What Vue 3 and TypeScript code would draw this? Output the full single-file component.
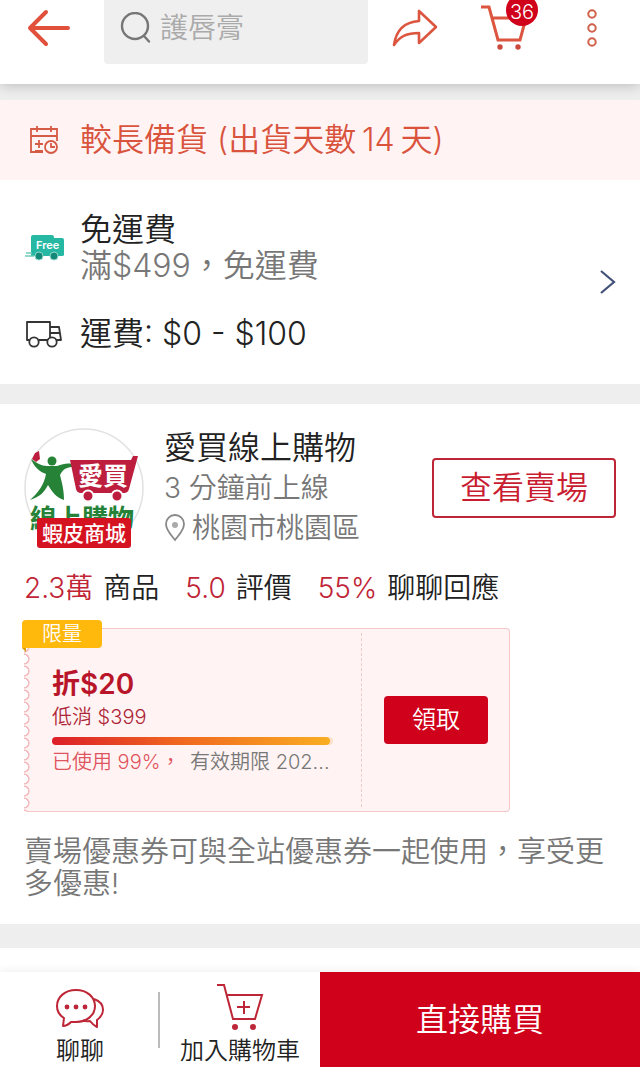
<script setup lang="ts">
interface Stat {
  value: string
  label: string
}

const cartCount = 36
const usedPercent = 99
const stats: Stat[] = [
  { value: '2.3萬', label: '商品' },
  { value: '5.0', label: '評價' },
  { value: '55%', label: '聊聊回應' },
]
</script>

<template>
  <div class="page">
    <header class="topbar">
      <button class="back" type="button" aria-label="返回">
        <svg width="44" height="40" viewBox="0 0 44 40" fill="none" stroke="#e0503a" stroke-width="4" stroke-linecap="round" stroke-linejoin="round">
          <path d="M41 20H3M19 4 3 20l16 16" />
        </svg>
      </button>
      <label class="search">
        <svg width="32" height="32" viewBox="0 0 32 32" fill="none" stroke="#777" stroke-width="2.400" stroke-linecap="round">
          <circle cx="15" cy="14" r="13" />
          <path d="m24 24 5 5.500" />
        </svg>
        <input type="search" placeholder="護唇膏" aria-label="搜尋" />
      </label>
      <nav class="tools">
        <button type="button" aria-label="分享">
          <svg width="46" height="40" viewBox="0 0 46 40" fill="none" stroke="#dc553e" stroke-width="2.600" stroke-linejoin="round">
            <path d="M27 3v10C12 14 4 23 2 37c6-9 13-12 25-12v10l17-16z" />
          </svg>
        </button>
        <button class="cart" type="button" aria-label="購物車">
          <svg width="64" height="50" viewBox="0 0 64 50" fill="none" stroke="#dc553e" stroke-width="3">
            <path d="M1 5h8l9 33h22l6-22H12" />
            <circle cx="20" cy="45" r="2.700" fill="#cc4a3c" stroke="none" />
            <circle cx="38" cy="45" r="2.700" fill="#cc4a3c" stroke="none" />
          </svg>
          <span class="count">{{ cartCount }}</span>
        </button>
        <button type="button" aria-label="更多">
          <svg width="12" height="40" viewBox="0 0 12 40" fill="#fff" stroke="#cf6149" stroke-width="2">
            <circle cx="6" cy="6" r="3.700" />
            <circle cx="6" cy="20" r="3.700" />
            <circle cx="6" cy="34" r="3.700" />
          </svg>
        </button>
      </nav>
    </header>

    <main>
      <section class="notice">
        <svg width="32" height="32" viewBox="0 0 32 32" fill="none" stroke="#d65b45" stroke-width="1.800">
          <path d="M15 28H3V5h26v12M3 12h26M9 2v6M23 2v6M7 20h8M11 16v8M7 27h8" />
          <circle cx="23" cy="23" r="6" />
          <path d="M23 19v4h4" />
        </svg>
        <p>較長備貨 (出貨天數&thinsp;14&thinsp;天)</p>
      </section>

      <section class="shipping">
        <div class="rows">
          <div class="row">
            <svg width="42" height="28" viewBox="0 0 42 28">
              <path d="M9 1h19q2 0 2 3h8q2 0 2 2v15q0 1-2 1H7V3q0-2 2-2z" fill="#27b8a3" />
              <path d="M2 19h6M1 22h9" stroke="#6fcbb9" stroke-width="1.400" />
              <circle cx="15" cy="22" r="4" fill="#158878" stroke="#8dd9cc" />
              <circle cx="30" cy="22" r="4" fill="#158878" stroke="#8dd9cc" />
              <text x="12" y="15" class="free">Free</text>
            </svg>
            <div>
              <p>免運費</p>
              <p class="muted">滿$499，免運費</p>
            </div>
          </div>
          <div class="row">
            <svg width="42" height="32" viewBox="0 0 42 32" fill="none" stroke="#333" stroke-width="1.800" stroke-linejoin="round">
              <path d="M5 22H3V4h23v18H15M26 9h9l2 13h-4M26 15h10" />
              <circle cx="10" cy="24" r="4.700" />
              <circle cx="28" cy="24" r="4.700" fill="#fff" />
            </svg>
            <p>運費: $0 - $100</p>
          </div>
        </div>
        <svg width="16" height="28" viewBox="0 0 16 28" fill="none" stroke="#415077" stroke-width="2.200">
          <path d="m1 3 13 11L1 25" />
        </svg>
      </section>

      <section class="shop">
        <div class="profile">
          <svg class="avatar" width="120" height="120" viewBox="0 0 120 120" role="img" aria-label="愛買線上購物">
            <circle cx="60" cy="60" r="59" fill="#fff" stroke="#e2e2e2" stroke-width="1.500" />
            <path d="m8 31 3-6 4-2 1 8-4 3z" fill="#bd1e3e" />
            <circle cx="28" cy="33" r="4.500" fill="#258237" />
            <path d="M7 31c6 4 10 7 16 7h10c6-2 10-3 15-2l1 3c-6 0-10 2-13 8 2 8 4 15 4 25-7-2-12-8-16-15-4 8-9 12-18 15 8-7 14-15 16-26-6-2-12-7-15-15z" fill="#258237" />
            <path d="M46 32h61l2-4h5l-9 33q-1 4-5 4H57q-4 0-5-4z" fill="#bd1e3e" />
            <circle cx="64" cy="68" r="5.500" fill="#bd1e3e" stroke="#fff" stroke-width="2" />
            <circle cx="93" cy="68" r="5.500" fill="#bd1e3e" stroke="#fff" stroke-width="2" />
            <text x="54" y="57" class="logo-name">愛買</text>
            <text x="6" y="100" class="logo-sub">線上購物</text>
            <rect x="13" y="90" width="94" height="30" rx="3" fill="#d51220" />
            <text x="18" y="113" class="logo-mall">蝦皮商城</text>
          </svg>
          <div class="about">
            <h1>愛買線上購物</h1>
            <p>3 分鐘前上線</p>
            <p class="place">
              <svg width="22" height="28" viewBox="0 0 22 28" fill="none" stroke="#888" stroke-width="1.800">
                <path d="M11 26C7 21 2 16 2 10a9 9 0 0 1 18 0c0 6-5 11-9 16z" />
                <circle cx="11" cy="11" r="3" fill="#aaa" stroke="none" />
              </svg>
              桃園市桃園區
            </p>
          </div>
          <button class="visit" type="button">查看賣場</button>
        </div>

        <ul class="stats">
          <li v-for="s in stats" :key="s.label"><b>{{ s.value }}</b>{{ s.label }}</li>
        </ul>

        <article class="coupon">
          <span class="tag">限量</span>
          <div class="offer">
            <h2>折$20</h2>
            <p class="minimum">低消 $399</p>
            <div class="track"><div class="fill" :style="{ width: usedPercent + '%' }"></div></div>
            <p class="terms"><span>已使用 {{ usedPercent }}%，</span> 有效期限 202...</p>
          </div>
          <div class="claim"><button type="button">領取</button></div>
        </article>

        <p class="note">賣場優惠券可與全站優惠券一起使用，享受更多優惠!</p>
      </section>
      <section class="next"></section>
    </main>

    <footer class="actions">
      <button class="chat" type="button">
        <svg width="50" height="44" viewBox="0 0 50 44" fill="none" stroke="#bd2636" stroke-width="2" stroke-linejoin="round">
          <path d="M21 3c11 0 19 7 19 16s-8 16-19 16h-5q-4 4-8 4l1-8C4 28 2 24 2 19 2 10 10 3 21 3z" />
          <path d="M39 12c6 2 9 6 9 11 0 4-2 7-6 10v7q-4-2-7-6-4 1-7-1" />
          <g fill="#bd2636" stroke="none">
            <circle cx="12" cy="20" r="2.400" />
            <circle cx="21" cy="20" r="2.400" />
            <circle cx="30" cy="20" r="2.400" />
          </g>
        </svg>
        聊聊
      </button>
      <button type="button">
        <svg width="50" height="50" viewBox="0 0 50 50" fill="none" stroke="#bd2636" stroke-width="2">
          <path d="M2 4h7l9 34h22l7-24H12M22 26h13M29 20v13" />
          <circle cx="20" cy="46" r="3" fill="#bd2636" stroke="none" />
          <circle cx="38" cy="46" r="3" fill="#bd2636" stroke="none" />
        </svg>
        加入購物車
      </button>
      <button class="buy" type="button">直接購買</button>
    </footer>
  </div>
</template>

<style>
body {
  margin: 0;
  background: #fff;
}
</style>

<style scoped>
.page {
  font-family: Inter, "Noto Sans CJK TC", sans-serif;
  font-size: 32px;
  font-weight: 350;
  line-height: 36px;
  color: #222;
  background: #eee;
  min-height: 100vh;
  overflow: hidden;
}
p, h1, h2, ul {
  margin: 0;
  padding: 0;
  font-weight: inherit;
}
button {
  font: inherit;
  color: inherit;
  background: none;
  border: 0;
  padding: 0;
}
svg {
  display: block;
  flex: none;
}
.topbar {
  display: flex;
  align-items: flex-start;
  height: 84px;
  background: #fff;
  box-shadow: 0 2px 12px rgba(0, 0, 0, 0.2);
}
.back {
  width: 104px;
  padding: 8px 0 0 27px;
}
.search {
  flex: 1;
  min-width: 0;
  display: flex;
  gap: 8px;
  height: 56px;
  padding: 0 16px 8px;
  align-items: center;
  background: #efefef;
  border-radius: 0 0 4px 4px;
}
.search input {
  flex: 1;
  min-width: 0;
  padding: 0;
  border: 0;
  outline: 0;
  background: none;
  font: inherit;
  font-size: 28px;
}
.search input::placeholder {
  color: #aaa;
}
.tools {
  display: flex;
  justify-content: space-between;
  align-items: flex-start;
  width: 206px;
  padding: 8px 42px 0 24px;
}
.cart {
  position: relative;
  margin-top: -6px;
}
.count {
  position: absolute;
  top: -8px;
  left: 26px;
  min-width: 32px;
  padding-top: 4px;
  border-radius: 16px;
  background: #d0011b;
  color: #fff;
  font-size: 20px;
  line-height: 28px;
  text-align: center;
}
.notice {
  display: flex;
  align-items: center;
  gap: 20px;
  margin-top: 16px;
  padding: 22px 28px;
  background: #fff3f4;
  color: #d9533d;
}
.shipping {
  display: flex;
  align-items: center;
  justify-content: space-between;
  padding: 32px 24px;
  background: #fff;
}
.rows {
  display: grid;
  gap: 32px;
}
.row {
  display: flex;
  align-items: center;
  gap: 14px;
}
.muted {
  color: #777;
}
.free {
  font: 600 11px Inter, sans-serif;
  fill: #fff;
}
.shop {
  margin-top: 20px;
  padding: 24px;
  background: #fff;
}
.profile {
  display: flex;
  align-items: center;
}
.avatar text {
  font-family: "Noto Sans CJK TC", sans-serif;
  font-weight: 700;
  fill: #fff;
}
.avatar .logo-name {
  font-size: 25px;
}
.avatar .logo-sub {
  font-size: 26px;
  fill: #258237;
}
.avatar .logo-mall {
  font-size: 21px;
  font-weight: 500;
}
.about {
  flex: 1;
  margin-left: 20px;
  font-size: 28px;
  line-height: 40px;
  color: #777;
}
.about h1 {
  font-size: 32px;
  color: #222;
}
.place {
  display: flex;
  align-items: center;
  gap: 6px;
}
.visit {
  padding: 10px 26px;
  border: 2px solid #bd2636;
  border-radius: 4px;
  color: #c91c30;
}
.stats {
  display: flex;
  gap: 26px;
  margin: 20px 0;
  list-style: none;
  font-size: 28px;
  line-height: 40px;
}
.stats b {
  margin-right: 10px;
  font-weight: inherit;
  color: #c02436;
}
.coupon {
  position: relative;
  display: flex;
  max-width: 485px;
  border: 1px solid #f5c6c8;
  border-left: 0;
  border-radius: 4px;
  background: #fff4f3;
  font-size: 20px;
  line-height: 30px;
}
.coupon::before {
  content: "";
  width: 6px;
  background: radial-gradient(circle at 0 6px, #fff 4px, #f2b9be 4px, #f2b9be 5px, #fff4f3 6px) 0 0 / 6px 12px;
}
.tag {
  position: absolute;
  top: -9px;
  left: -2px;
  padding: 0 20px;
  border-radius: 4px 4px 4px 0;
  background: #ffb80c;
  color: #fff;
  line-height: 28px;
}
.tag::after {
  content: "";
  position: absolute;
  top: 28px;
  left: 0;
  border-top: 4px solid #d99c0a;
  border-left: 4px solid transparent;
}
.offer {
  flex: 1;
  min-width: 0;
  padding: 37px 28px 34px 22px;
}
.offer h2 {
  font-size: 28px;
  font-weight: 600;
  line-height: 36px;
  color: #b9152a;
}
.minimum {
  color: #ae2437;
}
.track {
  margin: 5px 0 2px;
  border-radius: 4px;
  background: #ffe0cc;
}
.fill {
  height: 8px;
  border-radius: 4px;
  background: linear-gradient(90deg, #dc1f29, #f0661f 45%, #f9ae22);
}
.terms {
  white-space: nowrap;
  color: #777;
}
.terms span {
  margin-right: 4px;
  color: #df545f;
}
.claim {
  display: flex;
  align-items: center;
  padding: 0 21px 0 22px;
  margin: 4px 0;
  border-left: 1px dashed #eccaca;
}
.claim button {
  padding: 6px 28px;
  border-radius: 4px;
  background: #d0011b;
  color: #fff;
  font-size: 24px;
  line-height: 36px;
}
.note {
  margin-top: 24px;
  font-size: 29px;
  line-height: 32px;
  color: #777;
}
.next {
  height: 24px;
  margin-top: 24px;
  background: #fff;
}
.actions {
  position: relative;
  display: flex;
  background: #fff;
  box-shadow: 0 -2px 8px rgba(0, 0, 0, 0.06);
}
.actions button {
  flex: 1 1 0;
  display: flex;
  flex-direction: column;
  align-items: center;
  justify-content: flex-end;
  gap: 4px;
  height: 95px;
  font-size: 24px;
  line-height: 32px;
}
.actions .chat {
  background: linear-gradient(#bbb, #bbb) right center / 2px 56px no-repeat;
}
.actions .buy {
  flex-grow: 2;
  justify-content: center;
  background: #d0011b;
  color: #fff;
  font-size: 32px;
}
</style>
